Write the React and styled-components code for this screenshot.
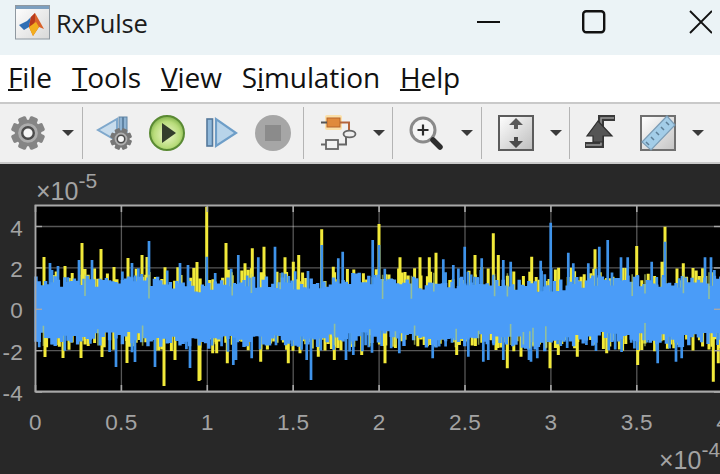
import React from 'react';
import styled, { createGlobalStyle } from 'styled-components';

const Global = createGlobalStyle`
  html, body { margin: 0; padding: 0; background: #282828; }
  #root { width: 720px; height: 474px; overflow: hidden; }
`;

const Window = styled.div`
  width: 720px; height: 474px; display: flex; flex-direction: column; overflow: hidden;
  font-family: "Open Sans", "Noto Sans", sans-serif; color: #1a1a1a;
`;
const TitleBar = styled.header`
  height: 55px; flex: none; background: #ebf3f6; display: flex; align-items: center; padding: 0 8px 0 15px;
`;
const LogoSvg = styled.svg`display: block; width: 36px; height: 36px; margin-top: -9px; flex: none; filter: blur(0.4px);`;
const Title = styled.span`
  font-size: 25.5px; margin-left: 5px; letter-spacing: -0.2px; color: #1c1c1c; flex: 1; margin-top: -9px;
`;
const WinControls = styled.div`display: flex; align-items: center; gap: 82px; margin-top: -11px;`;
const WinSvg = styled.svg`display: block; width: 24px; height: 24px; fill: none; stroke: #111; stroke-width: ${p => p.$w || 2};`;
const MenuBar = styled.nav`
  height: 47px; box-sizing: border-box; flex: none; background: #fff; display: flex; align-items: center; padding: 0 0 3px 8px; gap: 20px;
`;
const MenuItem = styled.span`
  font-size: 28px; letter-spacing: -0.1px; color: #111; line-height: 44px;
  u { text-underline-offset: 1px; text-decoration-thickness: 2px; }
`;
const Toolbar = styled.div`
  height: 58px; flex: none; background: #f0f0f0; border-top: 2px solid #c9c9c9; border-bottom: 2px solid #c9c9c9;
  display: flex; align-items: center;
`;
const ToolGroup = styled.div`
  display: flex; align-items: center; height: 100%; gap: ${p => p.$gap}px;
  padding: 0 ${p => p.$right}px 0 ${p => p.$left}px;
`;
const Separator = styled.div`width: 1px; height: 52px; background: #b4b4b4; flex: none;`;
const ToolIcon = styled.svg`width: 36px; height: 36px; display: block; flex: none; filter: blur(0.6px); overflow: visible;`;
const Caret = styled.div`
  width: 0; height: 0; margin: 0 2px; flex: none; border-left: 6px solid transparent; border-right: 6px solid transparent; border-top: 6px solid #3a3a3a; filter: blur(0.4px);
`;
const Scope = styled.main`flex: 1; background: #282828; min-height: 0;`;
const ChartSvg = styled.svg`display: block; width: 720px; height: 310px;`;
const TickText = styled.text`
  font-family: "Liberation Sans", Arial, sans-serif; font-size: 22.5px; fill: #a3a3a3; letter-spacing: 0.3px;
`;
const ScaleText = styled(TickText)`font-size: 25px; letter-spacing: 0;`;

const GearShape = ({ cx = 18, cy = 18, r = 15, fill = '#858585' }) => {
  const teeth = [];
  for (let i = 0; i < 8; i++) {
    teeth.push(<rect key={i} x={cx - r * 0.25} y={cy - r} width={r * 0.5} height={r * 0.42} rx={r * 0.1} fill={fill} transform={`rotate(${i * 45 + 22.5} ${cx} ${cy})`} />);
  }
  return (
    <g>
      {teeth}
      <circle cx={cx} cy={cy} r={r * 0.68} fill="#adadad" stroke={fill} strokeWidth={r * 0.2} />
      <circle cx={cx} cy={cy} r={r * 0.34} fill="#f6f6f6" stroke="#4c4c4c" strokeWidth={r * 0.14} />
    </g>
  );
};

const Logo = () => (
  <LogoSvg viewBox="0 0 36 36">
    <defs>
      <linearGradient id="win" x1="0" y1="0" x2="1" y2="1"><stop offset="0" stopColor="#fff" /><stop offset="1" stopColor="#d8d8d8" /></linearGradient>
    </defs>
    <rect x="0.5" y="0.5" width="34" height="33.5" fill="url(#win)" stroke="#8f98a0" />
    <rect x="1" y="1" width="33" height="3" fill="#7c9fbf" />
    <polygon points="4,20 12,16 16,12 14,22 9,25" fill="#2f6fb5" />
    <polygon points="20,8 29,24 24,22 18,31 14,22 16,12" fill="#d9622a" />
    <polygon points="20,8 16,12 14,22 16,24 20,16" fill="#b93a1c" />
    <polygon points="14,22 18,31 24,22 21,17" fill="#f2ae1e" />
  </LogoSvg>
);

const Back = () => (
  <ToolIcon viewBox="0 0 36 36">
    <rect x="23" y="2" width="3.5" height="17" fill="#8fb3d2" stroke="#5f83a3" strokeWidth="1" />
    <rect x="27.5" y="2" width="3.5" height="17" fill="#8fb3d2" stroke="#5f83a3" strokeWidth="1" />
    <polygon points="21,4 21,26 2,15" fill="#c8dcec" stroke="#7fa8cc" strokeWidth="2" />
    <GearShape cx={25} cy={24} r={11} fill="#777" />
  </ToolIcon>
);
const Play = () => (
  <ToolIcon viewBox="0 0 36 36">
    <defs>
      <radialGradient id="pl" cx="0.5" cy="0.55" r="0.55"><stop offset="0" stopColor="#eef7cc" /><stop offset="0.7" stopColor="#b8dc7a" /><stop offset="1" stopColor="#7fb04a" /></radialGradient>
    </defs>
    <circle cx="18" cy="18" r="17" fill="url(#pl)" stroke="#5a8a33" strokeWidth="2" />
    <polygon points="13,8 13,28 27,18" fill="#333d2c" />
  </ToolIcon>
);
const Step = () => (
  <ToolIcon viewBox="0 0 36 36">
    <rect x="5" y="4" width="5.5" height="27" fill="#8fb8da" stroke="#54789b" strokeWidth="1.6" />
    <polygon points="14,4 14,31 34,18" fill="#b8d4ea" stroke="#6e9ec8" strokeWidth="2.2" />
  </ToolIcon>
);
const Stop = () => (
  <ToolIcon viewBox="0 0 36 36">
    <circle cx="18" cy="18" r="18" fill="#a6a6a6" />
    <rect x="10" y="10" width="16" height="16" fill="#8b8b8b" />
  </ToolIcon>
);
const Model = () => (
  <ToolIcon viewBox="0 0 36 36">
    <rect x="4" y="0" width="17" height="15" rx="2" fill="#fbdfa8" />
    <rect x="6" y="3" width="13" height="9" fill="#e08a3c" stroke="#b5642a" />
    <path d="M0 7.5h6" stroke="#555" strokeWidth="2" />
    <path d="M19 7.5h9v8" stroke="#b5643a" strokeWidth="2" fill="none" />
    <ellipse cx="28.5" cy="19" rx="6" ry="3.4" fill="#eee" stroke="#666" strokeWidth="1.8" />
    <rect x="5" y="25" width="12" height="9" fill="#f2f2f2" stroke="#666" strokeWidth="1.8" />
    <path d="M0 29.5h5M17 29.5h8V22" stroke="#666" strokeWidth="2" fill="none" />
  </ToolIcon>
);
const Zoom = () => (
  <ToolIcon viewBox="0 0 36 36">
    <circle cx="17" cy="15" r="12" fill="#f5f5f5" stroke="#8a8a8a" strokeWidth="3" />
    <path d="M11.5 15h11M17 9.5v11" stroke="#2c2c2c" strokeWidth="2.2" />
    <path d="M27 25l7 7" stroke="#2e2e2e" strokeWidth="5.5" strokeLinecap="round" />
  </ToolIcon>
);
const Fit = () => (
  <ToolIcon viewBox="0 0 36 36">
    <defs>
      <linearGradient id="ft" x1="0" y1="0" x2="1" y2="1"><stop offset="0" stopColor="#fff" /><stop offset="1" stopColor="#bdbdbd" /></linearGradient>
    </defs>
    <rect x="1" y="1" width="34" height="34" fill="url(#ft)" stroke="#5c5c5c" strokeWidth="2" />
    <polygon points="18,3 11,10 16,10 16,14 20,14 20,10 25,10" fill="#5a5a5a" />
    <polygon points="18,33 11,26 16,26 16,22 20,22 20,26 25,26" fill="#4a4a4a" />
  </ToolIcon>
);
const Cursor = () => (
  <ToolIcon viewBox="0 0 36 36">
    <path d="M3 30h16V3h14" fill="none" stroke="#3a3a3a" strokeWidth="6" />
    <path d="M4 30h15V3h13" fill="none" stroke="#9a9a9a" strokeWidth="1.5" />
    <polygon points="16,6 5,21 11,21 11,27 21,27 21,21 30,21" fill="#555" stroke="#2e2e2e" strokeWidth="1.2" />
  </ToolIcon>
);
const Ruler = () => (
  <ToolIcon viewBox="0 0 36 36">
    <defs>
      <linearGradient id="rb" x1="0" y1="0" x2="1" y2="1"><stop offset="0" stopColor="#fff" /><stop offset="1" stopColor="#c4c4c4" /></linearGradient>
    </defs>
    <rect x="1" y="1" width="34" height="34" fill="url(#rb)" stroke="#707070" strokeWidth="2" />
    <polygon points="27,1 35,10 11,35 2,27" fill="#a3cde8" stroke="#7c9db6" strokeWidth="1.2" />
    <path d="M26 7l3 3M21 12l3 3M16 17l3 3M11 22l3 3M6 27l3 3" stroke="#5f7f97" strokeWidth="1.5" />
  </ToolIcon>
);

// deterministic noise for the two scope traces
const mulberry = (a) => () => {
  a |= 0; a = (a + 0x6d2b79f5) | 0;
  let t = Math.imul(a ^ (a >>> 15), 1 | a);
  t = (t + Math.imul(t ^ (t >>> 7), 61 | t)) ^ t;
  return ((t ^ (t >>> 14)) >>> 0) / 4294967296;
};
const Y0 = 309.3, K = 20.7;
const yOf = (v) => Y0 - v * K;

// spikes as [x, y] in pixels of the picture
const fromCrop = (ox, oy, list) => list.map(([a, b]) => [ox + a / 3, oy + b / 3]);
const YELLOW = [
  [82,243],[101,249],[44,257],[65,266],[114,267],[128,258],[142,255],[147,257],[197,262],[226,243],
  [45,357],[63,358],[81,358],[102,357],[127,363],[164,386],[175,360],[199,381],
  ...fromCrop(200, 200, [[20,20],[78,130],[135,190],[157,145],[192,140],[255,172],[296,165],[280,185],[365,88],[400,200],[537,72],[600,172],[660,172],[688,172],[708,158],
    [0,540],[38,460],[50,460],[82,490],[182,485],[265,490],[300,460],[355,470],[403,480],[485,465],[555,490],[770,465]]),
  ...fromCrop(460, 200, [[45,165],[100,100],[115,165],[215,170],[405,148],[530,138],[606,185],[615,80],[670,190],
    [108,450],[142,505],[183,470],[270,505],[295,465],[352,470],[440,460],[533,495],[760,545],[775,490]]),
];
const BLUE = [
  [50,263],[58,266],[79,260],[92,260],[132,263],[149,241],[180,263],[188,265],
  [116,367],[135,362],[155,367],[190,368],
  ...fromCrop(200, 200, [[20,170],[115,165],[175,172],[225,140],[365,135],[415,175],[428,155],[518,120],[537,135],[730,178],[760,195],
    [100,495],[108,480],[155,475],[320,480],[333,540],[438,480],[460,465],[598,460],[698,475]]),
  ...fromCrop(460, 200, [[14,140],[65,175],[130,180],[152,185],[242,182],[272,68],[325,158],[340,190],[385,190],[418,140],[443,120],[483,172],[503,172],[575,185],[615,125],[735,172],[753,172],
    [25,470],[70,485],[85,480],[130,480],[207,480],[213,485],[232,475],[593,490],[648,485],[665,475]]),
];

const makePaths = () => {
  const r = mulberry(2024);
  let yel = '', blue = '', pale = '', tall = '';
  for (let x = 36; x < 722; x += 3.2) {
    const slow = Math.sin(x / 47) * 0.1 + Math.sin(x / 19 + 1) * 0.1;
    const up = 1.0 + slow + r() * 0.6, dn = 1.2 - slow + r() * 0.65;
    blue += `M${x} ${yOf(up)}V${yOf(-dn)}`;
    if (r() < 0.55) yel += `M${x + 1} ${yOf(1.35 + r() * 0.7)}V${yOf(0)}`;
    if (r() < 0.55) yel += `M${x + 1} ${yOf(-1.45 - r() * 0.6)}V${yOf(0)}`;
    if (r() < 0.17) tall += `M${x} ${yOf(1.5 + r() * 0.5)}V${yOf(0)}`;
    if (r() < 0.2) tall += `M${x} ${yOf(-1.6 - r() * 0.5)}V${yOf(0)}`;
    if (r() < 0.07) pale += `M${x + 1} ${yOf(1.6 + r() * 0.2)}V${yOf(0.5 + r() * 0.5)}`;
    if (r() < 0.07) pale += `M${x + 1} ${yOf(-1.7 - r() * 0.2)}V${yOf(-0.6 - r() * 0.5)}`;
  }
  const spike = ([x, y]) => `M${x.toFixed(1)} ${y.toFixed(1)}V${Y0}`;
  yel += YELLOW.map(spike).join('');
  tall += BLUE.map(spike).join('');
  return { yel, blue, pale, tall };
};
const PATHS = makePaths();

const XT = [[0, '0'], [0.5, '0.5'], [1, '1'], [1.5, '1.5'], [2, '2'], [2.5, '2.5'], [3, '3'], [3.5, '3.5'], [4, '4']];
const YT = [[4, '4'], [2, '2'], [0, '0'], [-2, '-2'], [-4, '-4']];
const xOf = (v) => 35.5 + v * 171.8;

const Chart = () => (
  <ChartSvg viewBox="0 164 720 310">
    <rect x="35" y="205" width="690" height="187" fill="#000" />
    {YT.map(([v]) => <line key={v} x1="35" x2="720" y1={yOf(v)} y2={yOf(v)} stroke="#fff" strokeOpacity="0.34" strokeWidth="1.3" />)}
    {XT.map(([v]) => <line key={v} x1={xOf(v)} x2={xOf(v)} y1="205" y2="392" stroke="#fff" strokeOpacity="0.34" strokeWidth="1.3" />)}
    <path d={PATHS.yel} stroke="#f2ea3a" strokeWidth="3" fill="none" />
    <path d={PATHS.tall} stroke="#3f93ea" strokeWidth="2.7" fill="none" />
    <path d={PATHS.blue} stroke="#4a9cf8" strokeWidth="3.4" fill="none" />
    <path d={PATHS.pale} stroke="#b9d36a" strokeWidth="1.6" fill="none" opacity="0.65" />
    {YT.map(([v]) => <line key={v} x1="36" x2="42" y1={yOf(v)} y2={yOf(v)} stroke="#a8a8a8" strokeWidth="1.4" />)}
    {YT.map(([v]) => <line key={v} x1="714" x2="720" y1={yOf(v)} y2={yOf(v)} stroke="#a8a8a8" strokeWidth="1.4" />)}
    {XT.map(([v]) => <line key={v} x1={xOf(v)} x2={xOf(v)} y1="385" y2="392" stroke="#a8a8a8" strokeWidth="1.6" />)}
    {XT.map(([v]) => <line key={v} x1={xOf(v)} x2={xOf(v)} y1="205" y2="212" stroke="#a8a8a8" strokeWidth="1.6" />)}
    <path d="M720 205.5H35.5V391.5H720" fill="none" stroke="#a8a8a8" strokeWidth="1.8" />
    {YT.map(([v, t]) => <TickText key={v} x="23" y={yOf(v) + 9} textAnchor="end">{t}</TickText>)}
    {XT.map(([v, t]) => <TickText key={v} x={xOf(v)} y="430" textAnchor="middle">{t}</TickText>)}
    <ScaleText x="36" y="200">×10<tspan dy="-12" fontSize="21">-5</tspan></ScaleText>
    <ScaleText x="659" y="469">×10<tspan dy="-12" fontSize="21">-4</tspan></ScaleText>
  </ChartSvg>
);

const App = () => (
  <Window>
    <Global />
    <TitleBar>
      <Logo />
      <Title>RxPulse</Title>
      <WinControls>
        <WinSvg viewBox="0 0 24 24" $w={2}><path d="M1 12h23" /></WinSvg>
        <WinSvg viewBox="0 0 24 24" $w={2.4}><rect x="1.2" y="1.2" width="21" height="21" rx="3" /></WinSvg>
        <WinSvg viewBox="0 0 24 24" $w={1.9}><path d="M2 1l22 22M24 1L2 23" /></WinSvg>
      </WinControls>
    </TitleBar>
    <MenuBar>
      <MenuItem><u>F</u>ile</MenuItem>
      <MenuItem><u>T</u>ools</MenuItem>
      <MenuItem><u>V</u>iew</MenuItem>
      <MenuItem>S<u>i</u>mulation</MenuItem>
      <MenuItem><u>H</u>elp</MenuItem>
    </MenuBar>
    <Toolbar>
      <ToolGroup $left={10} $right={6} $gap={14}>
        <ToolIcon viewBox="0 0 36 36"><GearShape r={17} /></ToolIcon>
        <Caret />
      </ToolGroup>
      <Separator />
      <ToolGroup $left={13} $right={12} $gap={17}>
        <Back /><Play /><Step /><Stop />
      </ToolGroup>
      <Separator />
      <ToolGroup $left={17} $right={5} $gap={14}>
        <Model /><Caret />
      </ToolGroup>
      <Separator />
      <ToolGroup $left={13} $right={6} $gap={17}>
        <Zoom /><Caret />
      </ToolGroup>
      <Separator />
      <ToolGroup $left={16} $right={5} $gap={14}>
        <Fit /><Caret />
      </ToolGroup>
      <Separator />
      <ToolGroup $left={12} $right={0} $gap={22}>
        <Cursor /><Ruler />
      </ToolGroup>
      <ToolGroup $left={14} $right={0} $gap={0}>
        <Caret />
      </ToolGroup>
    </Toolbar>
    <Scope><Chart /></Scope>
  </Window>
);

export default App;
